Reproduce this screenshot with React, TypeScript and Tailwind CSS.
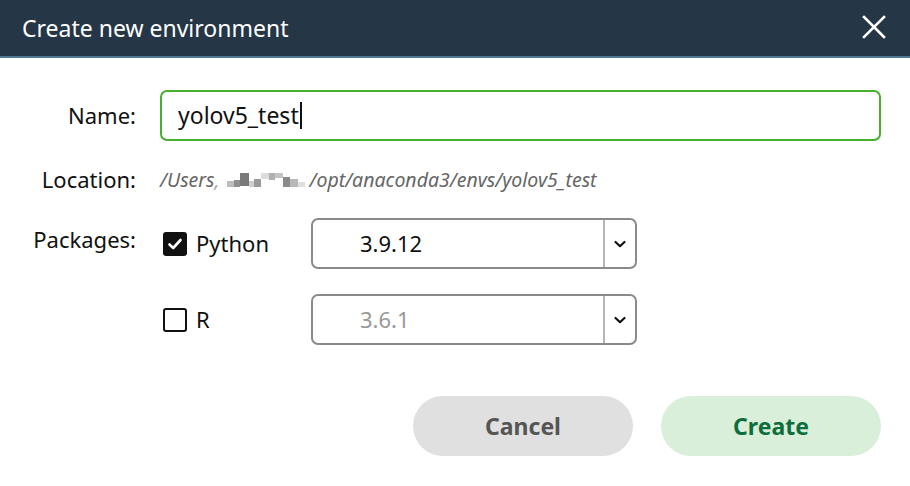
import React from "react";

function Chevron() {
  return (
    <svg width="14" height="10" viewBox="0 0 14 10" fill="none">
      <path d="M2.5 3 L7 7.2 L11.5 3" stroke="#111" strokeWidth="2.2" strokeLinecap="round" strokeLinejoin="round" />
    </svg>
  );
}

function Select({ value, disabled }: { value: string; disabled?: boolean }) {
  return (
    <div className="flex h-[51px] w-[326px] items-stretch rounded-[7px] border-2 border-[#8a8a8a] bg-white">
      <div className={`flex flex-1 items-center pl-[47px] text-[22px] ${disabled ? "text-[#999]" : "text-[#111]"}`}>{value}</div>
      <div className="w-[2px] bg-[#b5b5b5]" />
      <div className="flex w-[30px] items-center justify-center">
        <Chevron />
      </div>
    </div>
  );
}

export default function App() {
  return (
    <div className="h-[486px] w-[910px] bg-white text-[#111]" style={{ fontFamily: '"Noto Sans", "Open Sans", sans-serif' }}>
      <div className="flex h-[58px] items-center justify-between border-b-[2px] border-[#527a8e] bg-[#253646] pl-[22px] pr-[24px]">
        <div className="text-[23px] text-white">Create new environment</div>
        <svg width="24" height="24" viewBox="0 0 24 24" className="mb-[2px]">
          <path d="M2 2 L22 22 M22 2 L2 22" stroke="white" strokeWidth="2.6" strokeLinecap="square" />
        </svg>
      </div>

      <div className="flex flex-col pl-[22px] pr-[29px] pt-[32px]">
        <div className="flex items-center">
          <div className="w-[114px] text-right text-[22px]">Name:</div>
          <div className="ml-[24px] flex h-[51px] flex-1 items-center rounded-[7px] border-2 border-[#46b02c] pl-[16px] text-[23px]">
            <span>yolov5_test</span>
            <span className="ml-[1px] h-[27px] w-[2px] bg-[#111]" />
          </div>
        </div>

        <div className="mt-[22px] flex h-[33px] items-center">
          <div className="w-[114px] text-right text-[22px]">Location:</div>
          <div className="ml-[24px] flex items-center text-[19.5px] italic text-[#666]">
            <span>/Users</span>
            <span className="text-[#aaa]">,</span>
            <span className="ml-[8px] mr-[4px] flex h-[14px] w-[78px] items-center">
              <span className="h-[6px] w-[7px] self-end bg-[#bdbdbd]" />
              <span className="h-[7px] w-[6px] self-end bg-[#8f8f8f]" />
              <span className="h-[13px] w-[9px] bg-[#7a7a7a]" />
              <span className="h-[6px] w-[5px] self-end bg-[#cfcfcf]" />
              <span className="h-[8px] w-[7px] self-end bg-[#9a9a9a]" />
              <span className="h-[6px] w-[8px] self-start bg-[#dcdcdc]" />
              <span className="h-[7px] w-[6px] self-start bg-[#b0b0b0]" />
              <span className="h-[5px] w-[8px] self-start bg-[#c4c4c4]" />
              <span className="h-[10px] w-[7px] self-end bg-[#8a8a8a]" />
              <span className="h-[8px] w-[8px] self-end bg-[#b8b8b8]" />
              <span className="h-[5px] w-[7px] self-end bg-[#e0e0e0]" />
            </span>
            <span>/opt/anaconda3/envs/yolov5_test</span>
          </div>
        </div>

        <div className="mt-[22px] flex">
          <div className="w-[114px] pt-[5px] text-right text-[22px]">Packages:</div>
          <div className="ml-[27px] flex flex-col gap-[25px]">
            <div className="flex items-center">
              <div className="flex w-[148px] items-center">
                <div className="flex h-[24px] w-[24px] items-center justify-center rounded-[3px] bg-[#111]">
                  <svg width="18" height="18" viewBox="0 0 18 18">
                    <path d="M3.5 9.5 L7.2 13 L14.5 5" stroke="white" strokeWidth="2.6" fill="none" strokeLinecap="round" strokeLinejoin="round" />
                  </svg>
                </div>
                <span className="ml-[9px] text-[22px]">Python</span>
              </div>
              <Select value="3.9.12" />
            </div>
            <div className="flex items-center">
              <div className="flex w-[148px] items-center">
                <div className="h-[24px] w-[24px] rounded-[3px] border-2 border-[#111]" />
                <span className="ml-[9px] text-[22px]">R</span>
              </div>
              <Select value="3.6.1" disabled />
            </div>
          </div>
        </div>

        <div className="mt-[51px] flex justify-end gap-[28px]">
          <button className="h-[60px] w-[220px] rounded-full bg-[#e0e0e0] text-[23px] font-bold text-[#555]">Cancel</button>
          <button className="h-[60px] w-[220px] rounded-full bg-[#d9efda] text-[23px] font-bold text-[#0c6e3c]">Create</button>
        </div>
      </div>
    </div>
  );
}
